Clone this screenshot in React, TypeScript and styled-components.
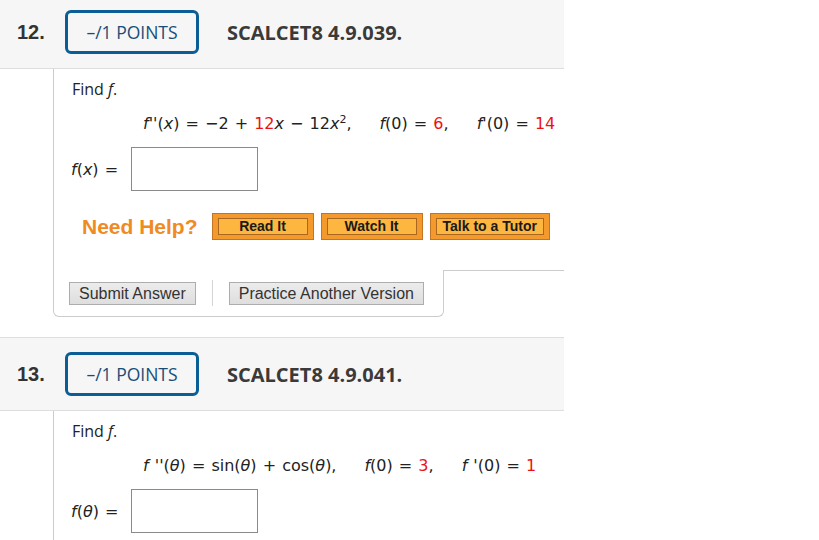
import React from 'react';
import styled, { createGlobalStyle } from 'styled-components';

const GlobalStyle = createGlobalStyle`
    body {
        margin: 0;
        background: #ffffff;
        font-family: 'Open Sans', Arial, sans-serif;
        color: #333;
    }
`;

interface IProblemProps {
    num: string;
    code: string;
    equation: React.ReactNode;
    variable: React.ReactNode;
    showHelp?: boolean;
}

const Problem: React.FunctionComponent<IProblemProps> = ({
    num,
    code,
    equation,
    variable,
    showHelp,
}) => {
    return (
        <Wrapper>
            <Header>
                <Num>{num}</Num>
                <PointsBox>–/1 POINTS</PointsBox>
                <Code>{code}</Code>
            </Header>
            <Body>
                <Content>
                    <FindText>
                        Find <i>f</i>.
                    </FindText>
                    <Equation>{equation}</Equation>
                    <AnswerRow>
                        <MathLabel>
                            <i>f</i>({variable}) =
                        </MathLabel>
                        <AnswerBox />
                    </AnswerRow>
                    {showHelp && (
                        <HelpRow>
                            <NeedHelp>Need Help?</NeedHelp>
                            <HelpButton>
                                <HelpInner>Read It</HelpInner>
                            </HelpButton>
                            <HelpButton>
                                <HelpInner>Watch It</HelpInner>
                            </HelpButton>
                            <HelpButton>
                                <HelpInner>Talk to a Tutor</HelpInner>
                            </HelpButton>
                        </HelpRow>
                    )}
                </Content>
                {showHelp && (
                    <FooterRow>
                        <FooterBox>
                            <GrayButton>Submit Answer</GrayButton>
                            <Separator />
                            <GrayButton>Practice Another Version</GrayButton>
                        </FooterBox>
                        <FooterFill />
                    </FooterRow>
                )}
            </Body>
        </Wrapper>
    );
};

const App = () => {
    return (
        <>
            <GlobalStyle />
            <Page>
                <Problem
                    num="12."
                    code="SCALCET8 4.9.039."
                    variable={<i>x</i>}
                    showHelp
                    equation={
                        <>
                            <i>f</i>''(<i>x</i>) = −2 + <Red>12</Red>
                            <i>x</i> − 12<i>x</i>
                            <sup>2</sup>,<Gap />
                            <i>f</i>(0) = <Red>6</Red>,<Gap />
                            <i>f</i>'(0) = <Red>14</Red>
                        </>
                    }
                />
                <Problem
                    num="13."
                    code="SCALCET8 4.9.041."
                    variable={<i>θ</i>}
                    equation={
                        <>
                            <i>f</i> ''(<i>θ</i>) = sin(<i>θ</i>) + cos(<i>θ</i>),
                            <Gap />
                            <i>f</i>(0) = <Red>3</Red>,<Gap />
                            <i>f</i> '(0) = <Red>1</Red>
                        </>
                    }
                />
            </Page>
        </>
    );
};

export default App;

const Page = styled.div`
    width: 564px;
    margin-top: -5px;
`;

const Wrapper = styled.div`
    margin-bottom: 20px;
`;

const Header = styled.div`
    display: flex;
    align-items: center;
    height: 72px;
    padding-left: 17px;
    background: #f6f6f6;
    border-top: 1px solid #dedede;
    border-bottom: 1px solid #dedede;
`;

const Num = styled.div`
    width: 48px;
    font-family: Arial, 'Liberation Sans', sans-serif;
    font-weight: bold;
    font-size: 20px;
    color: #333;
`;

const PointsBox = styled.div`
    box-sizing: border-box;
    width: 134px;
    height: 44px;
    display: flex;
    align-items: center;
    justify-content: center;
    border: 3px solid #0b5e95;
    border-radius: 6px;
    font-size: 17.5px;
    color: #174e78;
`;

const Code = styled.div`
    margin-left: 28px;
    font-weight: bold;
    font-size: 20px;
    color: #3a3a3a;
`;

const Body = styled.div`
    margin-left: 53px;
`;

const Content = styled.div`
    border-left: 1px solid #cccccc;
    padding: 9px 0 30px 18px;
`;

const FindText = styled.div`
    font-size: 16px;
    line-height: 22px;
    color: #222;
`;

const Equation = styled.div`
    margin: 13px 0 0 71px;
    font-family: 'DejaVu Sans', Verdana, sans-serif;
    font-size: 16px;
    line-height: 22px;
    word-spacing: 1px;
    color: #222;
    white-space: nowrap;

    sup {
        font-size: 11px;
        line-height: 0;
    }
`;

const Red = styled.span`
    color: #ee1111;
`;

const Gap = styled.span`
    display: inline-block;
    width: 28px;
`;

const AnswerRow = styled.div`
    display: flex;
    align-items: center;
    gap: 8px;
    margin-top: 12px;
`;

const MathLabel = styled.div`
    width: 52px;
    flex-shrink: 0;
    margin-left: -1px;
    font-family: 'DejaVu Sans', Verdana, sans-serif;
    font-size: 16px;
    word-spacing: 1px;
    color: #222;
    white-space: nowrap;
`;

const AnswerBox = styled.div`
    box-sizing: border-box;
    width: 127px;
    height: 44px;
    border: 1px solid #8a8a8a;
    background: #fff;
`;

const HelpRow = styled.div`
    display: flex;
    align-items: center;
    gap: 7px;
    margin: 22px 0 0 10px;
`;

const NeedHelp = styled.div`
    margin-right: 7px;
    font-family: Arial, 'Liberation Sans', sans-serif;
    font-weight: bold;
    font-size: 21px;
    color: #f08a22;
`;

const HelpButton = styled.div`
    border: 1px solid #c27523;
    background: #f49a2c;
    padding: 4px 5px;
`;

const HelpInner = styled.div`
    box-sizing: border-box;
    min-width: 90px;
    padding: 0 6px;
    border: 1px solid #a9671f;
    background: #fdb640;
    font-family: Arial, 'Liberation Sans', sans-serif;
    font-weight: bold;
    font-size: 14px;
    line-height: 15px;
    text-align: center;
    color: #1a1a1a;
`;

const FooterRow = styled.div`
    display: flex;
`;

const FooterBox = styled.div`
    box-sizing: border-box;
    width: 391px;
    display: flex;
    align-items: center;
    padding: 10px 0 10px 15px;
    border: 1px solid #cccccc;
    border-top: none;
    border-radius: 0 0 6px 6px;
`;

const GrayButton = styled.div`
    padding: 1px 9px;
    border: 1px solid #adadad;
    background: linear-gradient(#ececec, #dedede);
    font-family: Arial, 'Liberation Sans', sans-serif;
    font-size: 16px;
    line-height: 19px;
    color: #333;
`;

const Separator = styled.div`
    width: 1px;
    height: 26px;
    margin: 0 16px;
    background: #d4d4d4;
`;

const FooterFill = styled.div`
    flex: 1;
    border-top: 1px solid #cccccc;
`;
